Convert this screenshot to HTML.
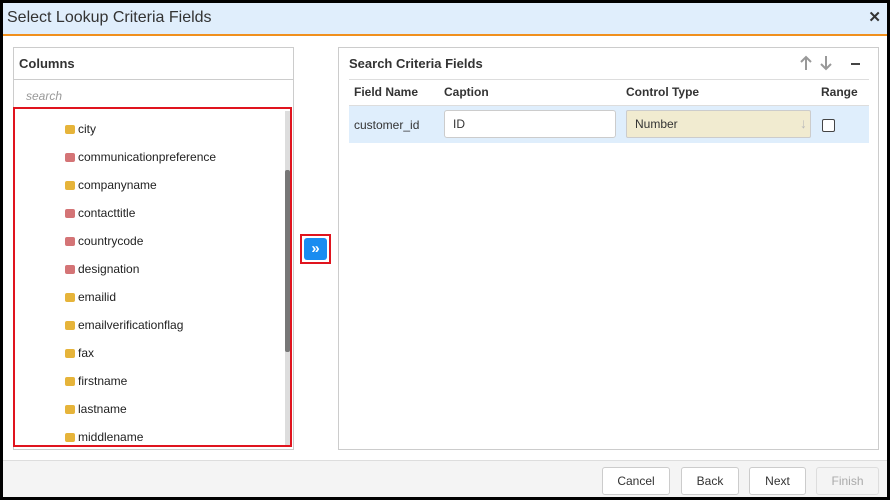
<!DOCTYPE html><html><head><style>
*{box-sizing:border-box;margin:0;padding:0}
body{width:890px;height:500px;background:#000;font-family:"Liberation Sans",sans-serif;position:relative;overflow:hidden}
.win{position:absolute;left:3px;top:3px;width:884px;height:494px;background:#fff}
.ttl{position:absolute;left:0;top:0;width:884px;height:33px;background:#e0eefc;border-bottom:2px solid #f0901e;font-size:16px;color:#333;padding:6px 0 0 4px}
.x{position:absolute;right:6px;top:5px;font-size:15px;font-weight:bold;color:#333}
.abs{position:absolute}
.pan{position:absolute;border:1px solid #ccc;background:#fff}
.b{font-weight:bold;font-size:13px;color:#333}
.it{position:absolute;left:50px;font-size:12px;color:#222}
.it i{display:inline-block;width:10px;height:9px;border-radius:2px;margin-right:3px;vertical-align:-1px}
.y{background:#e6b43a}.r{background:#d47476}
.btn{position:absolute;top:464px;height:28px;border:1px solid #ccc;border-radius:3px;background:#fff;font-size:12px;color:#333;text-align:center;line-height:26px}
</style></head><body><div class="win">
<div class="ttl">Select Lookup Criteria Fields<span class="x">✕</span></div>
<div class="pan" style="left:10px;top:44px;width:281px;height:403px">
<div class="b abs" style="left:5px;top:8px">Columns</div>
<div class="abs" style="left:0;top:31px;width:279px;border-top:1px solid #ccc"></div>
<div class="abs" style="left:12px;top:41px;font-size:12px;font-style:italic;color:#999">search</div>
</div>
<div class="abs" style="left:10px;top:104px;width:279px;height:340px;border:2px solid #e0141e;overflow:hidden">
<div class="abs" style="left:270px;top:2px;width:5px;height:336px;background:#ddd"></div>
<div class="abs" style="left:270px;top:61px;width:5px;height:182px;background:#777;border-radius:2px"></div>
<div class="it" style="top:13px"><i class="y"></i>city</div>
<div class="it" style="top:41px"><i class="r"></i>communicationpreference</div>
<div class="it" style="top:69px"><i class="y"></i>companyname</div>
<div class="it" style="top:97px"><i class="r"></i>contacttitle</div>
<div class="it" style="top:125px"><i class="r"></i>countrycode</div>
<div class="it" style="top:153px"><i class="r"></i>designation</div>
<div class="it" style="top:181px"><i class="y"></i>emailid</div>
<div class="it" style="top:209px"><i class="y"></i>emailverificationflag</div>
<div class="it" style="top:237px"><i class="y"></i>fax</div>
<div class="it" style="top:265px"><i class="y"></i>firstname</div>
<div class="it" style="top:293px"><i class="y"></i>lastname</div>
<div class="it" style="top:321px"><i class="y"></i>middlename</div>
</div>
<div class="abs" style="left:297px;top:231px;width:31px;height:30px;border:2px solid #e0141e"></div>
<div class="abs" style="left:301px;top:235px;width:23px;height:22px;background:#1a8cf0;border-radius:3px;color:#fff;font-size:15px;text-align:center;line-height:21px;font-weight:bold">»</div>
<div class="pan" style="left:335px;top:44px;width:541px;height:403px">
<div class="b abs" style="left:10px;top:8px">Search Criteria Fields</div>
<svg class="abs" style="left:460px;top:7px" width="36" height="16" viewBox="0 0 36 16" fill="none" stroke="#999" stroke-width="2"><path d="M7 15V2M2 7l5-5 5 5M27 1v13M22 9l5 5 5-5"/></svg>
<div class="abs" style="left:512px;top:15px;width:9px;height:2px;background:#444"></div>
<div class="abs" style="left:10px;top:31px;width:520px;border-top:1px solid #ddd"></div>
<div class="b abs" style="left:15px;top:37px;font-size:12px">Field Name</div>
<div class="b abs" style="left:105px;top:37px;font-size:12px">Caption</div>
<div class="b abs" style="left:287px;top:37px;font-size:12px">Control Type</div>
<div class="b abs" style="left:482px;top:37px;font-size:12px">Range</div>
<div class="abs" style="left:10px;top:57px;width:520px;height:38px;background:#dfeefc;border-top:1px solid #ddd"></div>
<div class="abs" style="left:15px;top:70px;font-size:12px;color:#333">customer_id</div>
<div class="abs" style="left:105px;top:62px;width:172px;height:28px;background:#fff;border:1px solid #ccc;border-radius:3px;font-size:12px;color:#333;padding:6px 8px">ID</div>
<div class="abs" style="left:287px;top:62px;width:185px;height:28px;background:#f1ebd0;border:1px solid #ccc;border-radius:2px;font-size:12px;color:#333;padding:6px 8px">Number<span style="position:absolute;right:3px;top:4px;color:#bbb;font-size:14px">↓</span></div>
<div class="abs" style="left:483px;top:71px;width:13px;height:13px;border:1px solid #444;border-radius:2px;background:#fff"></div>
</div>
<div class="abs" style="left:0;top:457px;width:884px;height:37px;background:#f4f4f4;border-top:1px solid #ddd"></div>
<div class="btn" style="left:599px;width:68px">Cancel</div>
<div class="btn" style="left:678px;width:58px">Back</div>
<div class="btn" style="left:746px;width:57px">Next</div>
<div class="btn" style="left:813px;width:63px;background:#f4f4f4;color:#aaa;border-color:#ddd">Finish</div>
</div></body></html>
